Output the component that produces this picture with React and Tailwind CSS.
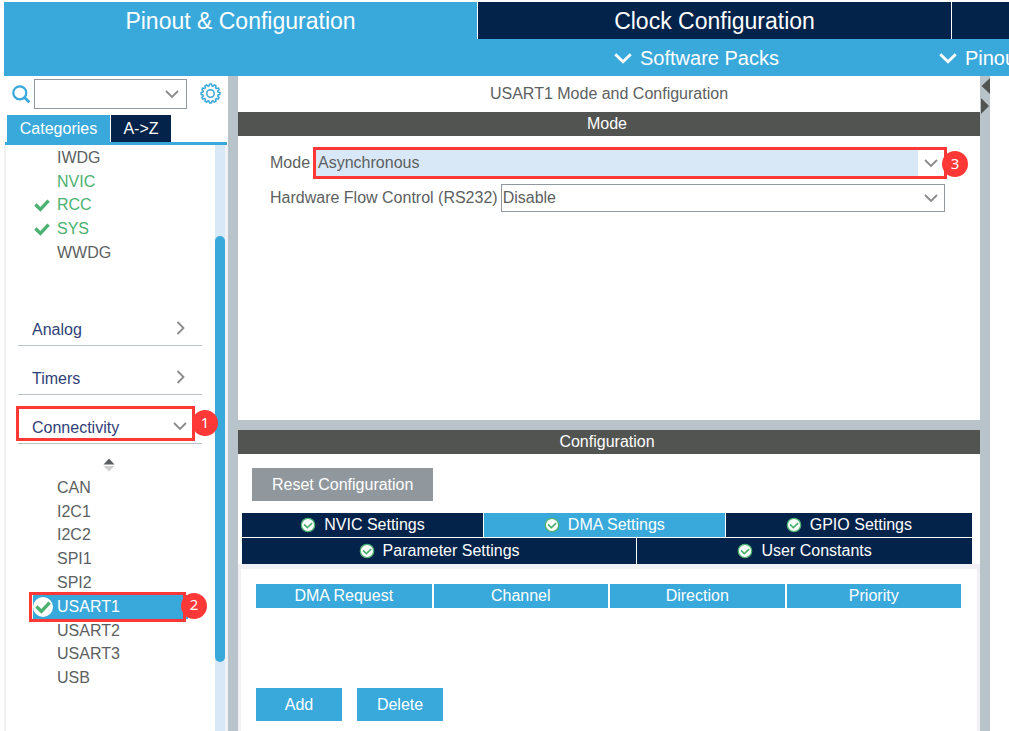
import { useState } from "react";
import clsx from "clsx";

const SYSTEM_ITEMS = [
  { name: "IWDG" },
  { name: "NVIC", configured: true },
  { name: "RCC", configured: true, checked: true },
  { name: "SYS", configured: true, checked: true },
  { name: "WWDG" },
];

const CONNECTIVITY_ITEMS = ["CAN", "I2C1", "I2C2", "SPI1", "SPI2", "USART1", "USART2", "USART3", "USB"];

const COLUMNS = ["DMA Request", "Channel", "Direction", "Priority"];

function Chevron({ className, strokeWidth = 1.8, direction = "down" }) {
  return (
    <svg viewBox="0 0 14 14" className={className} fill="none" stroke="currentColor" strokeWidth={strokeWidth} aria-hidden="true">
      <path d={direction === "down" ? "M1 4l6 6 6-6" : "M4.5 1l6 6-6 6"} />
    </svg>
  );
}

function SearchIcon() {
  return (
    <svg viewBox="0 0 18 18" className="size-[18px] text-[#39a9dc]" fill="none" stroke="currentColor" strokeWidth="2.2" aria-hidden="true">
      <circle cx="7.8" cy="7.8" r="6.5" />
      <path d="M12.3 12.3l5 5" strokeWidth="2.8" />
    </svg>
  );
}

const GEAR_PATH = (() => {
  const teeth = 12;
  const points = [];
  for (let i = 0; i < teeth; i++) {
    const a = (i * 2 * Math.PI) / teeth - Math.PI / 2;
    [
      [-0.2, 7.6],
      [-0.1, 9.5],
      [0.1, 9.5],
      [0.2, 7.6],
    ].forEach(([d, r]) => points.push(`${(10.5 + r * Math.cos(a + d)).toFixed(2)} ${(10.5 + r * Math.sin(a + d)).toFixed(2)}`));
  }
  return `M${points.join("L")}Z`;
})();

function GearIcon() {
  return (
    <svg viewBox="0 0 21 21" className="size-[21px] text-[#39a9dc]" fill="none" stroke="currentColor" strokeWidth="1.5" strokeLinejoin="round" aria-hidden="true">
      <path d={GEAR_PATH} />
      <circle cx="10.5" cy="10.5" r="3.7" />
    </svg>
  );
}

function Tick({ className }) {
  return (
    <svg viewBox="0 0 16 14" className={className} fill="none" stroke="#4bb170" strokeWidth="3.4" aria-hidden="true">
      <path d="M1.4 6.6l5 4.8 8.2-8.8" />
    </svg>
  );
}

function StatusBadge() {
  return (
    <svg viewBox="0 0 16 16" className="size-4 shrink-0" fill="none" aria-hidden="true">
      <circle cx="8" cy="8" r="6.7" fill="#fff" stroke="#4bb170" strokeWidth="1.3" />
      <path d="M4 7.400l3.300 3.200 4.900-4.500" stroke="#4bb170" strokeWidth="1.7" />
    </svg>
  );
}

function Step({ number, className }) {
  return (
    <span className={clsx("absolute flex size-[26px] items-center justify-center rounded-full bg-[#fe3737] pb-0.5 font-['Noto_Sans',sans-serif] text-[15px] leading-none text-white", className)}>
      {number}
    </span>
  );
}

function Group({ name, open, children }) {
  return (
    <button type="button" aria-expanded={!!open} className="relative flex h-[49px] w-full items-end justify-between border-b border-[#b8c4ca] pr-[15px] pb-[5px] pl-[14px] text-left leading-5 text-[#2f3f78]">
      {name}
      <Chevron direction={open ? "down" : "right"} className="mb-[5px] size-[14px] text-[#8a8a8a]" />
      {children}
    </button>
  );
}

function Sidebar() {
  const [tab, setTab] = useState("Categories");
  const [selected, setSelected] = useState("USART1");
  return (
    <aside className="flex w-56 shrink-0 flex-col">
      <div className="flex h-[39px] shrink-0 items-center pb-1 pl-2">
        <label htmlFor="search" aria-label="Search">
          <SearchIcon />
        </label>
        <div className="relative ml-1 w-[153px]">
          <input id="search" type="text" className="block h-[30px] w-full border border-[#90989e] bg-white px-1 outline-none" />
          <Chevron className="pointer-events-none absolute top-2 right-2 size-[14px] text-[#8a8a8a]" />
        </div>
        <button type="button" aria-label="Settings" className="ml-[13px]">
          <GearIcon />
        </button>
      </div>
      <div className="mx-px flex h-[30px] shrink-0 gap-px border-b-[3px] border-[#39a9dc] pl-0.5 text-white">
        {["Categories", "A->Z"].map((t) => (
          <button key={t} type="button" onClick={() => setTab(t)} className={clsx("leading-[27px]", t === tab ? "w-[103px] bg-[#39a9dc]" : "w-[60px] bg-[#03234b]")}>
            {t}
          </button>
        ))}
      </div>
      <div className="flex min-h-0 flex-1">
        <nav className="min-w-0 flex-1 border-l-2 border-[#f0f0f5] pt-px pr-[13px] pl-3 text-[#5c5f61]">
          <ul className="grid h-[119px] grid-rows-5">
            {SYSTEM_ITEMS.map((item) => (
              <li key={item.name} className={clsx("flex items-center pl-4", item.configured && "text-[#4bb170]")}>
                <span className="w-[23px]">{item.checked && <Tick className="h-[14px] w-4" />}</span>
                <button type="button" className="leading-5">{item.name}</button>
              </li>
            ))}
          </ul>
          <div className="mt-8">
            <Group name="Analog" />
            <Group name="Timers" />
            <Group name="Connectivity" open>
              <span className="absolute top-[11px] right-[7px] bottom-[2px] left-[-2px] border-[3px] border-[#fe3737]" />
              <Step number={1} className="right-[-16px] bottom-[7px]" />
            </Group>
          </div>
          <svg viewBox="0 0 12 16" className="mt-[13px] ml-[85px] h-4 w-3" aria-hidden="true">
            <path d="M.5 7.500l5.500-6 5.500 6z" fill="#5c5f61" />
            <path d="M.5 9l5.500 5.500L11.500 9z" fill="#cfcfcf" />
          </svg>
          <ul className="mt-[3px] grid h-[214px] grid-rows-9">
            {CONNECTIVITY_ITEMS.map((name) => (
              <li key={name} className={clsx("relative ml-[15px] flex items-center", name === selected && "w-[155px] bg-[#39a9dc] text-white")}>
                <span className="w-6">
                  {name === selected && (
                    <span className="flex size-5 items-center justify-center rounded-full bg-white">
                      <Tick className="h-[14px] w-4" />
                    </span>
                  )}
                </span>
                <button type="button" onClick={() => setSelected(name)} className="leading-5">{name}</button>
                {name === "USART1" && (
                  <>
                    <span className="absolute inset-y-[-3px] right-[2px] left-[-4px] border-[3px] border-[#fe3737]" />
                    <Step number={2} className="top-[-2px] right-[-19px]" />
                  </>
                )}
              </li>
            ))}
          </ul>
        </nav>
        <div className="w-[10px] bg-[#d9e8f6] pt-[91px]">
          <div className="h-[426px] rounded-full bg-[#39a9dc]" />
        </div>
        <div className="w-[3px] bg-[#f0f0f5]" />
      </div>
    </aside>
  );
}

function Bar({ children }) {
  return <h2 className="h-6 shrink-0 bg-[#525452] pr-1 text-center leading-6 text-white">{children}</h2>;
}

function ModePane() {
  return (
    <section className="flex h-[344px] shrink-0 flex-col bg-white">
      <h1 className="h-9 text-center leading-9 text-[#5c5f61]">USART1 Mode and Configuration</h1>
      <Bar>Mode</Bar>
      <div className="flex flex-col gap-[7px] pt-[13px] pr-[35px] pl-8 text-[#5c5f61]">
        <div className="flex items-center">
          <label htmlFor="mode" className="mr-[5px]">Mode</label>
          <div className="relative flex-1">
            <select id="mode" className="block h-7 w-full appearance-none border border-[#90989e] bg-[#d9e8f6] px-0.5 outline-none">
              <option>Asynchronous</option>
            </select>
            <span className="pointer-events-none absolute inset-y-px right-px flex w-[26px] items-center justify-center bg-white">
              <Chevron className="size-[14px] text-[#8a8a8a]" />
            </span>
            <span className="pointer-events-none absolute inset-x-[-2px] inset-y-[-2px] border-[3px] border-[#fe3737]" />
            <Step number={3} className="top-[2px] right-[-23px]" />
          </div>
        </div>
        <div className="flex items-center">
          <label htmlFor="flow" className="mr-[3px]">Hardware Flow Control (RS232)</label>
          <div className="relative flex-1">
            <select id="flow" className="block h-7 w-full appearance-none border border-[#90989e] bg-white px-px outline-none">
              <option>Disable</option>
            </select>
            <Chevron className="pointer-events-none absolute top-[7px] right-[7px] size-[14px] text-[#8a8a8a]" />
          </div>
        </div>
      </div>
    </section>
  );
}

function SettingsTab({ name, active, onSelect, className }) {
  return (
    <button type="button" onClick={() => onSelect(name)} className={clsx("flex items-center justify-center gap-2 text-white", name === active ? "bg-[#39a9dc]" : "bg-[#03234b]", className)}>
      <StatusBadge />
      {name}
    </button>
  );
}

function ConfigurationPane() {
  const [active, setActive] = useState("DMA Settings");
  return (
    <section className="flex min-h-0 flex-1 flex-col bg-white">
      <Bar>Configuration</Bar>
      <div className="px-[14px] pt-[14px] pb-3">
        <button type="button" className="h-[33px] bg-[#90989e] px-5 text-white">Reset Configuration</button>
      </div>
      <div className="mr-2 ml-1 flex flex-col gap-px">
        <div className="flex h-6 gap-px">
          <SettingsTab name="NVIC Settings" active={active} onSelect={setActive} className="w-[33%]" />
          <SettingsTab name="DMA Settings" active={active} onSelect={setActive} className="w-[33%]" />
          <SettingsTab name="GPIO Settings" active={active} onSelect={setActive} className="flex-1" />
        </div>
        <div className="flex h-[26px] gap-px">
          <SettingsTab name="Parameter Settings" active={active} onSelect={setActive} className="w-[54%]" />
          <SettingsTab name="User Constants" active={active} onSelect={setActive} className="flex-1" />
        </div>
      </div>
      <div className="flex-1 border-x-[3px] border-t-[5px] border-[#f0f0f5] pt-[15px] pr-[14px] pl-[15px]">
        <table className="w-full table-fixed border-collapse">
          <thead>
            <tr>
              {COLUMNS.map((c) => (
                <th key={c} scope="col" className="h-6 border-r-2 border-white bg-[#39a9dc] p-0 font-normal leading-6 text-white">{c}</th>
              ))}
            </tr>
          </thead>
          <tbody />
        </table>
        <div className="mt-20 flex gap-[15px] text-white">
          <button type="button" className="h-[33px] w-[86px] bg-[#39a9dc]">Add</button>
          <button type="button" className="h-[33px] w-[86px] bg-[#39a9dc]">Delete</button>
        </div>
      </div>
    </section>
  );
}

function MenuItem({ children }) {
  return (
    <button type="button" className="flex shrink-0 items-center gap-2">
      <Chevron className="size-[18px]" strokeWidth={2.2} />
      {children}
    </button>
  );
}

export default function App() {
  return (
    <div className="flex h-screen flex-col overflow-hidden bg-white pt-0.5 pl-1 font-['Liberation_Sans',Arial,sans-serif] text-base text-[#5c5f61]">
      <header className="shrink-0 overflow-hidden bg-[#39a9dc] text-white">
        <div className="flex h-[37px] text-[23px] leading-6">
          <button type="button" className="w-[473px] shrink-0">Pinout &amp; Configuration</button>
          <button type="button" className="w-[474px] shrink-0 border-l border-white bg-[#03234b]">Clock Configuration</button>
          <button type="button" aria-label="Project Manager" className="flex-1 border-l border-white bg-[#03234b]" />
        </div>
        <div className="flex h-[37px] items-center gap-[160px] pl-[610px] text-xl">
          <MenuItem>Software Packs</MenuItem>
          <MenuItem>Pinout</MenuItem>
        </div>
      </header>
      <div className="flex min-h-0 flex-1">
        <Sidebar />
        <div className="w-[10px] shrink-0 bg-[#b8c4ca]" />
        <main className="flex min-w-0 flex-1 flex-col gap-[10px] bg-[#b8c4ca]">
          <ModePane />
          <ConfigurationPane />
        </main>
        <div className="w-[10px] shrink-0 bg-[#b8c4ca] pt-px">
          <svg viewBox="0 0 10 38" className="h-[38px] w-[10px]" fill="#525452" aria-hidden="true">
            <path d="M10 1v16L1.500 9z" />
            <path d="M1 21v16l8-8z" />
          </svg>
        </div>
        <div className="w-[19px] shrink-0" />
      </div>
    </div>
  );
}
